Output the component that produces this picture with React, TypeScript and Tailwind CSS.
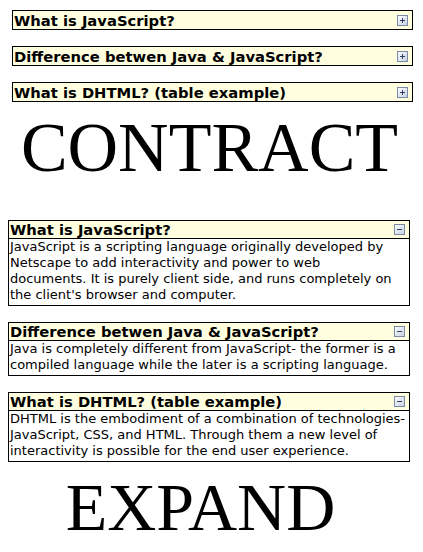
const items = [
  {
    title: "What is JavaScript?",
    lines: [
      "JavaScript is a scripting language originally developed by",
      "Netscape to add interactivity and power to web",
      "documents. It is purely client side, and runs completely on",
      "the client's browser and computer.",
    ],
  },
  {
    title: "Difference betwen Java & JavaScript?",
    lines: [
      "Java is completely different from JavaScript- the former is a",
      "compiled language while the later is a scripting language.",
    ],
  },
  {
    title: "What is DHTML? (table example)",
    lines: [
      "DHTML is the embodiment of a combination of technologies-",
      "JavaScript, CSS, and HTML. Through them a new level of",
      "interactivity is possible for the end user experience.",
    ],
  },
];

function ToggleIcon({ open }: { open: boolean }) {
  const id = open ? "grad-minus" : "grad-plus";
  return (
    <svg width="11" height="11" viewBox="0 0 11 11" className="shrink-0">
      <defs>
        <linearGradient id={id} x1="0" y1="0" x2="1" y2="1">
          <stop offset="0" stopColor="#ffffff" />
          <stop offset="1" stopColor="#c5cfe0" />
        </linearGradient>
      </defs>
      <rect x="0.5" y="0.5" width="10" height="10" fill={`url(#${id})`} stroke="#7b8aa8" />
      <line x1="3" y1="5.5" x2="8" y2="5.5" stroke="#2f3f63" />
      {!open && <line x1="5.5" y1="3" x2="5.5" y2="8" stroke="#2f3f63" />}
    </svg>
  );
}

function Header({ title, open }: { title: string; open: boolean }) {
  return (
    <div
      className={`flex items-center justify-between bg-[#ffffe0] pl-[1px] pr-[4px] ${
        open ? "h-[17px]" : "h-[18px]"
      }`}
    >
      <span className="text-[14.75px] font-bold leading-[17px] text-black">{title}</span>
      <ToggleIcon open={open} />
    </div>
  );
}

export default function App() {
  return (
    <div className="w-[423px] h-[552px] bg-white overflow-hidden font-['DejaVu_Sans',Verdana,sans-serif]">
      {/* collapsed rows */}
      <div className="flex flex-col gap-[16px] pt-[10px] pl-[12px] w-[413px]">
        {items.map((it) => (
          <div key={it.title} className="border border-black">
            <Header title={it.title} open={false} />
          </div>
        ))}
      </div>

      <div className="text-center font-['Liberation_Serif',serif] text-[70px] leading-none mt-[11px] pr-[4px]">
        CONTRACT
      </div>

      {/* expanded rows */}
      <div className="flex flex-col gap-[16px] mt-[37px] pl-[8px] w-[410px]">
        {items.map((it) => (
          <div key={it.title} className="border border-black">
            <div className="border-b border-black">
              <Header title={it.title} open={true} />
            </div>
            <p className="text-[13px] leading-[16px] pl-[1px] pb-[2px] text-black whitespace-nowrap">
              {it.lines.map((l, i) => (
                <span key={i} className="block">
                  {l}
                </span>
              ))}
            </p>
          </div>
        ))}
      </div>

      <div className="text-center font-['Liberation_Serif',serif] text-[68px] leading-none mt-[11px] pr-[22px]">
        EXPAND
      </div>
    </div>
  );
}
